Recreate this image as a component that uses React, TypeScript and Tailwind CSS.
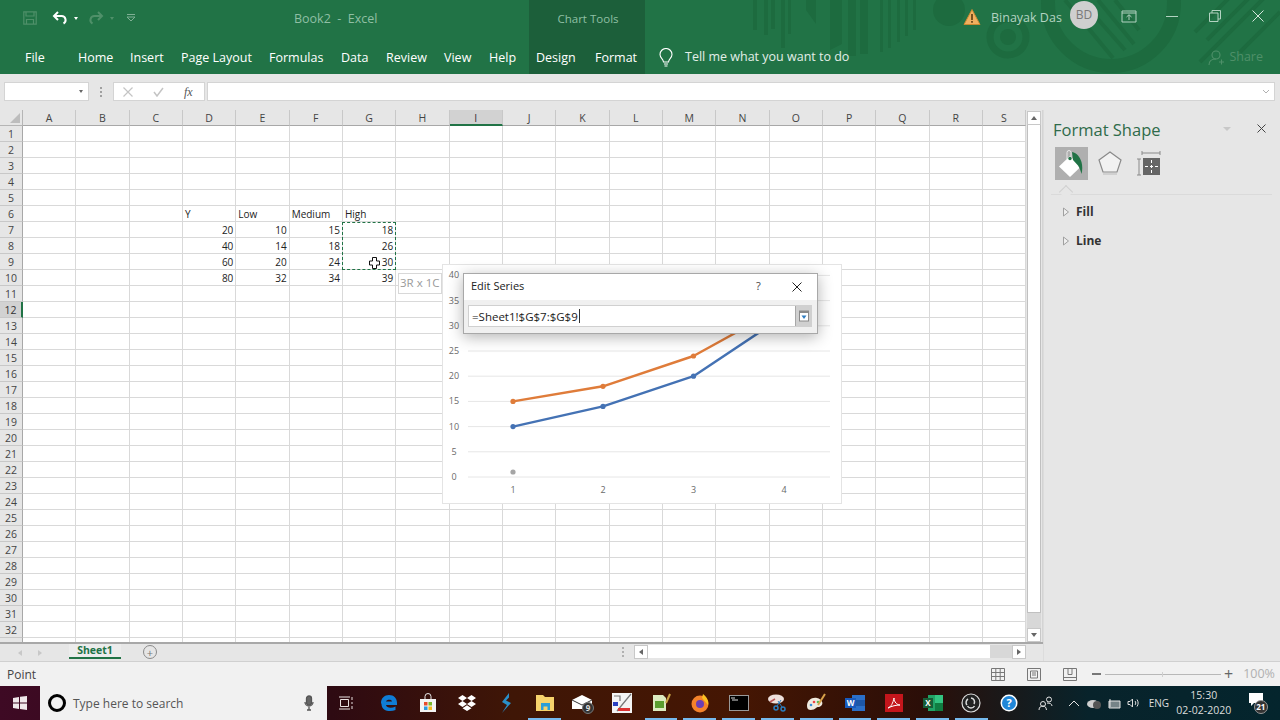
import React from "react";

const FONT = "font-['Open_Sans','Noto_Sans',sans-serif]";
const COLS = ["A","B","C","D","E","F","G","H","I","J","K","L","M","N","O","P","Q","R","S"];
const DATA: Record<string, string> = {
  "6D":"Y","6E":"Low","6F":"Medium","6G":"High",
  "7D":"20","7E":"10","7F":"15","7G":"18",
  "8D":"40","8E":"14","8F":"18","8G":"26",
  "9D":"60","9E":"20","9F":"24","9G":"30",
  "10D":"80","10E":"32","10F":"34","10G":"39",
};
const ROWS = Array.from({ length: 33 }, (_, i) => i + 1);

function TitlePattern() {
  return (
    <svg className="absolute inset-0 pointer-events-none" width="1280" height="74" viewBox="0 0 1280 74">
      <path d="M529 0h116v74H529z" fill="#1c5f3a" />
      <g fill="#1d6b3f">
        <rect x="753" y="0" width="4" height="30" />
        <rect x="764" y="0" width="4" height="35" />
        <rect x="771" y="0" width="4" height="29" />
        <rect x="781" y="0" width="4" height="48" />
        <rect x="788" y="0" width="3" height="34" />
        <rect x="860" y="0" width="8" height="54" />
        <rect x="880" y="0" width="3" height="52" />
        <rect x="888" y="0" width="3" height="48" />
        <rect x="897" y="0" width="3" height="42" />
        <rect x="905" y="0" width="3" height="36" />
        <rect x="913" y="0" width="3" height="30" />
        <path d="M806 0h10v24l-10-14zM830 0h12v44l-12 6zM848 0h8v56h-8z" />
        <circle cx="949" cy="10" r="16" />
        <circle cx="1008" cy="37" r="8" />
      </g>
      <g fill="none" stroke="#1d6b3f">
        <circle cx="1008" cy="37" r="18" strokeWidth="7" />
        <circle cx="1111" cy="3" r="63" strokeWidth="14" />
        <path d="M1065 0l48 58M1081 0l44 50M1098 0l36 44M1115 0l24 30" strokeWidth="4" />
        <path d="M1195 32l40-40M1207 40l50-50M1200 62l68-68M1240 52l40-40" strokeWidth="4" />
      </g>
    </svg>
  );
}

function Titlebar() {
  return (
    <div className="relative h-[74px] bg-[#217346] overflow-hidden">
      <TitlePattern />
      <div className="relative h-[36px] flex items-center">
        <svg className="ml-[23px]" width="14" height="14" viewBox="0 0 14 14" fill="none" stroke="#4f9069" strokeWidth="1.200">
          <path d="M.8.8h12.400v12.400H.8z" /><path d="M3 1v4h8V1M3.500 13V8.500h7V13" />
        </svg>
        <svg className="ml-[15px]" width="16" height="14" viewBox="0 0 16 14" fill="none" stroke="#fff" strokeWidth="2">
          <path d="M6 1L2 5l4 4M2 5h7.500a4 4 0 0 1 2 7.500" />
        </svg>
        <span className="ml-[6px] w-0 h-0 border-x-[2.500px] border-x-transparent border-t-[3px] border-t-white" />
        <svg className="ml-[10px]" width="16" height="14" viewBox="0 0 16 14" fill="none" stroke="#4f9069" strokeWidth="2">
          <path d="M10 1l4 4-4 4M14 5H6.500a4 4 0 0 0-2 7.500" />
        </svg>
        <span className="ml-[6px] w-0 h-0 border-x-[2.500px] border-x-transparent border-t-[3px] border-t-[#4f9069]" />
        <svg className="ml-[12px]" width="10" height="8" viewBox="0 0 10 8" fill="none" stroke="#7fb094" strokeWidth="1">
          <path d="M1 .5h8M1 3l4 4 4-4z" />
        </svg>
        <div className={`ml-[158px] pt-[2px] w-[92px] text-[12.500px] whitespace-pre text-[#8fbfa4] ${FONT}`}>Book2  -  Excel</div>
        <div className={`ml-[144px] pt-[2px] w-[116px] text-center text-[11.500px] text-[#8fbfa4] ${FONT}`}>Chart Tools</div>
        <svg className="ml-[317px] mt-[-3px]" width="18" height="18" viewBox="0 0 18 18">
          <path d="M9 1.500L17 16.500H1z" fill="#f0b060" stroke="#c98a30" />
          <path d="M8.200 6h1.600v6H8.200zM8.200 13h1.600v1.800H8.200z" fill="#5a3a10" />
        </svg>
        <div className={`ml-[10px] text-[12.500px] w-[78px] whitespace-nowrap text-[#b3d3c1] ${FONT}`}>Binayak Das</div>
        <div className={`ml-[1px] mt-[-6px] w-[28px] h-[28px] rounded-full bg-[#cfcfcf] text-[#7a7a7a] text-[12px] flex items-center justify-center ${FONT}`}>BD</div>
        <svg className="ml-[23px] mt-[-4px]" width="16" height="13" viewBox="0 0 16 13" fill="none" stroke="#b3d3c1">
          <path d="M1 1h14v11H1zM1 3h14M8 10V5M5.500 7L8 4.700 10.500 7" />
        </svg>
        <div className="ml-[29px] mt-[-4px] w-[12px] h-px bg-[#b3d3c1]" />
        <svg className="ml-[31px] mt-[-4px]" width="12" height="12" viewBox="0 0 12 12" fill="none" stroke="#b3d3c1">
          <path d="M.5 3h8.500v8.500H.5zM3 3V.5h8.500V9H9" />
        </svg>
        <svg className="ml-[31px] mt-[-4px]" width="12" height="12" viewBox="0 0 12 12" stroke="#d5e6dc" strokeWidth="1">
          <path d="M.5.500l11 11M11.500.500l-11 11" />
        </svg>
      </div>
      <div className={`relative h-[38px] flex items-center text-[12.500px] text-white pt-[7px] ${FONT}`}>
        <div className="ml-[25px] w-[53px]">File</div>
        <div className="w-[52px]">Home</div>
        <div className="w-[51px]">Insert</div>
        <div className="w-[88px]">Page Layout</div>
        <div className="w-[72px]">Formulas</div>
        <div className="w-[45px]">Data</div>
        <div className="w-[58px]">Review</div>
        <div className="w-[45px]">View</div>
        <div className="w-[47px]">Help</div>
        <div className="flex items-center w-[109px]">
          <span className="w-[59px]">Design</span><span>Format</span>
        </div>
        <svg className="ml-[14px] mt-[-2px]" width="14" height="20" viewBox="0 0 14 20" fill="none" stroke="#fff" strokeWidth="1.100">
          <path d="M4.500 14c0-3-3.500-4-3.500-7.500a6 6 0 0 1 12 0C13 10 9.500 11 9.500 14zM5 16h4M5.500 18h3" />
        </svg>
        <div className="ml-[12px] mt-[-2px] whitespace-nowrap text-[12.500px] text-[#e3efe8]">Tell me what you want to do</div>
        <svg className="ml-[359px] mt-[-2px]" width="16" height="16" viewBox="0 0 16 16" fill="none" stroke="#4f9069" strokeWidth="1.100">
          <circle cx="8" cy="5" r="4" /><path d="M1 15c0-4 3-6 7-6M11 12h5M13.500 9.500v5" />
        </svg>
        <div className="ml-[5px] mt-[-2px] text-[#4f9069]">Share</div>
      </div>
    </div>
  );
}

function FormulaBar() {
  return (
    <div className="h-[36px] bg-[#e6e6e6] flex items-center pb-[1px] pl-[4px] pr-[5px]">
      <div className="w-[85px] h-[19px] bg-white border border-[#d4d4d4] flex items-center justify-end pr-[5px]">
        <span className="w-0 h-0 border-x-[2.500px] border-x-transparent border-t-[3px] border-t-[#666]" />
      </div>
      <div className="ml-[11px] w-[2px] h-[10px] border-l-2 border-dotted border-[#a0a0a0]" />
      <div className="ml-[11px] w-[92px] h-[19px] bg-white border border-[#d4d4d4] flex items-center">
        <svg className="ml-[9px]" width="10" height="10" viewBox="0 0 10 10" stroke="#c4c4c4" strokeWidth="1.200"><path d="M.5.500l9 9M9.500.500l-9 9" /></svg>
        <svg className="ml-[20px]" width="11" height="10" viewBox="0 0 11 10" fill="none" stroke="#c4c4c4" strokeWidth="1.500"><path d="M1 5l3 4 6-8" /></svg>
        <span className="ml-[20px] text-[12px] italic text-[#555] font-['Liberation_Serif',serif]">fx</span>
      </div>
      <div className="ml-[2px] flex-1 h-[19px] bg-white border border-[#d4d4d4] flex items-center justify-end pr-[4px]">
        <svg width="8" height="5" viewBox="0 0 8 5" fill="none" stroke="#b0b0b0"><path d="M1 1l3 3 3-3" /></svg>
      </div>
    </div>
  );
}

function Grid() {
  return (
    <div className={`relative w-[1026px] h-[532px] overflow-hidden bg-white ${FONT}`}>
      <div className="grid grid-cols-[23px_repeat(18,53.330px)_43px] auto-rows-[16px]">
        <div className="bg-[#e6e6e6] border-r border-b border-[#b5b5b5] relative">
          <span className="absolute right-[2px] bottom-[2px] w-0 h-0 border-l-[10px] border-l-transparent border-b-[10px] border-b-[#bdbdbd]" />
        </div>
        {COLS.map((c) => (
          <div
            key={c}
            className={c === "I"
              ? "h-[16px] bg-[#d2d2d2] border-b-2 border-b-[#217346] border-r border-r-[#c8c8c8] text-[10.500px] leading-[17px] text-center text-[#333]"
              : "h-[16px] bg-[#e6e6e6] border-b border-b-[#a8a8a8] border-r border-r-[#c8c8c8] text-[10.500px] leading-[17px] text-center text-[#444]"}
          >
            {c}
          </div>
        ))}
        {ROWS.map((r) => (
          <React.Fragment key={r}>
            <div
              className={r === 12
                ? "h-[16px] bg-[#d2d2d2] border-r-2 border-r-[#217346] border-b border-b-[#c8c8c8] text-[10.500px] leading-[17px] text-center text-[#333]"
                : "h-[16px] bg-[#e6e6e6] border-r border-r-[#a8a8a8] border-b border-b-[#c8c8c8] text-[10.500px] leading-[17px] text-center text-[#444]"}
            >
              {r <= 32 ? r : ""}
            </div>
            {COLS.map((c) => {
              const v = DATA[`${r}${c}`];
              const num = v !== undefined && /^\d+$/.test(v);
              return (
                <div
                  key={c}
                  className={`h-[16px] border-r border-b border-[#d9d9d9] text-[10px] leading-[16px] text-[#222] px-[2px] whitespace-nowrap ${num ? "text-right" : "text-left"}`}
                >
                  {v}
                </div>
              );
            })}
          </React.Fragment>
        ))}
      </div>

      <div className="absolute left-[342px] top-[112px] w-[54px] h-[48px] border border-dashed border-[#217346]" />
      <svg className="absolute left-[369px] top-[147px]" width="11" height="12" viewBox="0 0 11 12" fill="#fff" stroke="#111" strokeWidth="1">
        <path d="M3.500.500h4v3.500h3v4h-3v3.500h-4V8h-3V4h3z" />
      </svg>
      <div className="absolute left-[398px] top-[163px] w-[44px] h-[21px] bg-white border border-[#d8d8d8] text-[11.500px] leading-[18px] text-[#9a9a9a] pl-[1px] whitespace-nowrap">3R x 1C</div>

      <div className="absolute left-[442px] top-[154px] w-[400px] h-[240px] bg-white border border-[#e4e4e4]">
        <svg width="398" height="238" viewBox="443 265 398 238">
          <g stroke="#e6e6e6" strokeWidth="1">
            {[0,1,2,3,4,5,6,7,8].map((i) => (
              <line key={i} x1="468" x2="830" y1={477 - i * 25.2} y2={477 - i * 25.2} />
            ))}
          </g>
          <g fontFamily="'Open Sans',sans-serif" fontSize="9" fill="#6a6a6a" textAnchor="middle">
            {[0,5,10,15,20,25,30,35,40].map((v, i) => (
              <text key={v} x="454" y={480 - i * 25.2}>{v}</text>
            ))}
            {[[1,513],[2,603],[3,693.500],[4,784]].map(([l, x]) => (
              <text key={l} x={x} y="493">{l}</text>
            ))}
          </g>
          <polyline points="513,401.400 603,386.300 693.500,356 784,306" fill="none" stroke="#df7c3a" strokeWidth="2.400" strokeLinejoin="round" />
          <polyline points="513,426.600 603,406.400 693.500,376.200 784,316" fill="none" stroke="#4472b4" strokeWidth="2.400" strokeLinejoin="round" />
          {[[513,401.400],[603,386.300],[693.500,356]].map(([x,y]) => <circle key={x} cx={x} cy={y} r="2.600" fill="#df7c3a" />)}
          {[[513,426.600],[603,406.400],[693.500,376.200]].map(([x,y]) => <circle key={x} cx={x} cy={y} r="2.600" fill="#4472b4" />)}
          <circle cx="513" cy="472" r="2.600" fill="#a5a5a5" />
        </svg>
      </div>

      <div className="absolute left-[463px] top-[163px] w-[355px] h-[61px] bg-[#f0f0f0] border border-[#a8a8a8] shadow-[0_3px_14px_rgba(0,0,0,0.3)]">
        <div className="h-[26px] bg-white flex items-center pl-[7px] pb-[1px] text-[11px] text-[#222]">
          <span className="w-[285px]">Edit Series</span>
          <span className="w-[36px] text-[11px] text-[#444]">?</span>
          <svg width="10" height="10" viewBox="0 0 10 10" stroke="#222" strokeWidth="1"><path d="M.5.500l9 9M9.500.500l-9 9" /></svg>
        </div>
        <div className="mt-[5px] ml-[4px] mr-[5px] h-[22px] bg-white border border-[#d0d0d0] flex items-center">
          <span className="pl-[3px] pt-[2px] text-[11.500px] text-[#222] whitespace-nowrap">=Sheet1!$G$7:$G$9</span>
          <span className="ml-[1px] w-px h-[14px] bg-[#333]" />
          <div className="ml-auto w-[16px] h-[20px] bg-[#d0d0d0] border-l border-[#a8a8a8] flex items-center justify-center">
            <svg width="10" height="12" viewBox="0 0 10 12"><rect x=".5" y="1" width="9" height="10" fill="#fff" stroke="#8a8a8a" /><path d="M1 1h8v2H1z" fill="#8a8a8a" /><path d="M2.500 5.500h5L5 9z" fill="#2f7cc0" /></svg>
          </div>
        </div>
      </div>
    </div>
  );
}

function VScroll() {
  return (
    <div className="w-[17px] h-[532px] bg-[#e6e6e6] flex flex-col pl-[1px] pr-[1px] pt-[1px] border-r border-[#d4d4d4]">
      <div className="h-[14px] bg-white border border-[#c8c8c8] flex items-center justify-center">
        <span className="w-0 h-0 border-x-[3.500px] border-x-transparent border-b-[4px] border-b-[#666]" />
      </div>
      <div className="h-[488px] bg-white border-x border-b border-[#c0c0c0]" />
      <div className="flex-1 bg-[#d8d8d8]" />
      <div className="h-[14px] bg-white border border-[#c8c8c8] flex items-center justify-center">
        <span className="w-0 h-0 border-x-[3.500px] border-x-transparent border-t-[4px] border-t-[#666]" />
      </div>
    </div>
  );
}

function Panel() {
  return (
    <div className={`w-[237px] bg-[#e6e6e6] border-l border-[#dcdcdc] ${FONT}`}>
      <div className="h-[37px] flex items-start pl-[9px] pt-[9px]">
        <span className="text-[16.500px] leading-[22px] text-[#2f6b4a] whitespace-nowrap">Format Shape</span>
        <span className="ml-[62px] mt-[8px] w-0 h-0 border-x-[4px] border-x-transparent border-t-[4px] border-t-[#c8c8c8]" />
        <svg className="ml-[26px] mt-[5px]" width="9" height="9" viewBox="0 0 9 9" stroke="#444" strokeWidth="1"><path d="M.5.500l8 8M8.500.500l-8 8" /></svg>
      </div>
      <div className="flex items-center h-[33px] ml-[11px]">
        <div className="w-[33px] h-[33px] bg-[#afafaf] flex items-center justify-center">
          <svg width="33" height="33" viewBox="0 0 33 33">
            <path d="M15 9l11 10.500L15 30 4 19.500z" fill="#fff" />
            <path d="M17 5c5 1 8 5 9.500 10 1 4 1 8 0 12-.8-3-1.800-6-3.500-8.500l-5-5.500z" fill="#217346" />
            <path d="M12 12V5.500a2 2 0 0 1 4 0V11" fill="none" stroke="#e8e8e8" strokeWidth="1" />
            <circle cx="15" cy="11.500" r="1.700" fill="#217346" />
          </svg>
        </div>
        <svg className="ml-[9px]" width="26" height="28" viewBox="0 0 26 28" fill="#f2f2f2" stroke="#8a8a8a" strokeWidth="1.200">
          <path d="M13 2l11 8-4 12H6L2 10z" /><path d="M6 24h14" stroke="#d0d0d0" strokeWidth="2" />
        </svg>
        <svg className="ml-[12px]" width="26" height="28" viewBox="0 0 26 28" fill="none" stroke="#8a8a8a">
          <path d="M7 3h18M7 1v4M25 1v4M2 9h4M2 25h4M4 9v16" />
          <rect x="8" y="8" width="17" height="17" fill="#666" stroke="none" />
          <path d="M16.500 10v13M10 16.500h13" stroke="#fff" strokeDasharray="3 2" />
        </svg>
      </div>
      <div className="relative mt-[14px] ml-[7px] mr-[8px] h-px bg-[#dadada]">
        <span className="absolute left-[10px] top-[-7px] w-[10px] h-[10px] rotate-45 border-l border-t border-[#d0d0d0] bg-[#e6e6e6]" />
      </div>
      <div className="mt-[2px] pl-[19px] flex flex-col text-[12px] font-bold text-[#333]">
        <div className="h-[29px] flex items-center">
          <svg width="6" height="10" viewBox="0 0 6 10" fill="#eee" stroke="#a0a0a0"><path d="M.5 1l5 4-5 4z" /></svg>
          <span className="ml-[7px]">Fill</span>
        </div>
        <div className="h-[30px] flex items-center">
          <svg width="6" height="10" viewBox="0 0 6 10" fill="#eee" stroke="#a0a0a0"><path d="M.5 1l5 4-5 4z" /></svg>
          <span className="ml-[7px]">Line</span>
        </div>
      </div>
    </div>
  );
}

function TabBar() {
  return (
    <div className={`h-[19px] w-[1043px] bg-[#e6e6e6] border-t-2 border-[#a8a8a8] flex items-start ${FONT}`}>
      <span className="ml-[18px] mt-[6px] w-0 h-0 border-y-[3px] border-y-transparent border-r-[4px] border-r-[#c8c8c8]" />
      <span className="ml-[16px] mt-[6px] w-0 h-0 border-y-[3px] border-y-transparent border-l-[4px] border-l-[#c8c8c8]" />
      <div className="ml-[27px] w-[52px] h-[15px] bg-[#ececec] border-b-2 border-[#217346] text-[10.500px] font-bold leading-[12px] text-center text-[#217346]">Sheet1</div>
      <div className="ml-[22px] mt-[1px] w-[14px] h-[14px] rounded-full border border-[#8a8a8a] flex items-center justify-center text-[11px] leading-none text-[#777]">+</div>
      <div className="ml-[465px] mt-[3px] w-[2px] h-[10px] border-l-2 border-dotted border-[#b0b0b0]" />
      <div className="ml-[10px] mt-[1px] w-[14px] h-[14px] bg-white border border-[#c8c8c8] flex items-center justify-center">
        <span className="w-0 h-0 border-y-[3px] border-y-transparent border-r-[4px] border-r-[#666]" />
      </div>
      <div className="mt-[1px] w-[342px] h-[13px] bg-white" />
      <div className="mt-[1px] w-[22px] h-[13px] bg-[#d8d8d8]" />
      <div className="mt-[1px] w-[14px] h-[14px] bg-white border border-[#c8c8c8] flex items-center justify-center">
        <span className="w-0 h-0 border-y-[3px] border-y-transparent border-l-[4px] border-l-[#666]" />
      </div>
    </div>
  );
}

function StatusBar() {
  return (
    <div className={`h-[25px] bg-[#f1f1f1] border-t border-[#d0d0d0] flex items-center ${FONT}`}>
      <span className="ml-[7px] w-[984px] text-[12px] pt-[1px] text-[#444]">Point</span>
      <svg width="14" height="13" viewBox="0 0 14 13" fill="none" stroke="#777"><path d="M.5.500h13v12H.5zM.5 4.500h13M.5 8.500h13M4.800.500v12M9.200.500v12" /></svg>
      <svg className="ml-[22px]" width="14" height="13" viewBox="0 0 14 13" fill="none" stroke="#777"><path d="M.5.500h13v12H.5zM3.500 3h7v7h-7zM5 5h4M5 7h4" /></svg>
      <svg className="ml-[22px]" width="14" height="13" viewBox="0 0 14 13" fill="none" stroke="#777"><path d="M.5.500h13v12H.5zM5 .5v6h4v-6M.5 9.500h13" /></svg>
      <div className="ml-[15px] w-[9px] h-[2px] bg-[#777]" />
      <div className="relative ml-[4px] w-[116px] h-px bg-[#b8b8b8]">
        <span className="absolute left-[57px] top-[-2px] w-px h-[5px] bg-[#d0d0d0]" />
      </div>
      <div className="ml-[3px] text-[16px] leading-none text-[#666]">+</div>
      <div className="ml-[10px] text-[12.500px] text-[#b0b0b0]">100%</div>
    </div>
  );
}

function Win() {
  return (
    <svg width="14" height="14" viewBox="0 0 14 14" fill="#efe8ea">
      <path d="M0 2l6-1v5.500H0zM7 .800L14 0v6.500H7zM0 7.500h6V13l-6-1zM7 7.500h7V14l-7-1z" />
    </svg>
  );
}

const Slot = ({ children, active }: { children: React.ReactNode; active?: boolean }) => (
  <div className="relative w-[38.800px] h-[34px] flex items-center justify-center">
    {children}
    {active && <span className="absolute bottom-0 left-[3px] right-[3px] h-[2px] bg-[#76b9ed]" />}
  </div>
);

function Taskbar() {
  return (
    <div className={`h-[34px] flex items-center text-white bg-[linear-gradient(90deg,#3e0a24_0%,#2e0a12_26%,#3f1606_40%,#451603_58%,#2b0e08_72%,#08232b_85%,#04252d_100%)] ${FONT}`}>
      <div className="w-[40px] flex justify-center"><Win /></div>
      <div className="w-[287px] h-[34px] bg-[#f1f1f1] flex items-center">
        <span className="ml-[8px] w-[18px] h-[18px] rounded-full border-[3px] border-black" />
        <span className="ml-[7px] pt-[1px] w-[231px] text-[12px] text-[#555]">Type here to search</span>
        <svg width="10" height="16" viewBox="0 0 10 16" fill="none" stroke="#555" strokeWidth="1.300"><rect x="2.500" y="1" width="5" height="9" rx="2.500" fill="#666" /><path d="M1 7a4 4 0 0 0 8 0M5 12v3M3 15h4" /></svg>
      </div>
      <div className="w-[43px] flex justify-center pr-[5px]">
        <svg width="14" height="14" viewBox="0 0 14 14" fill="none" stroke="#e8e0e0"><path d="M1.500 3.500h8v7h-8zM0 1h11M0 13h11M13 1v3M13 6v2M13 10v3" /></svg>
      </div>
      <Slot>
        <svg width="18" height="18" viewBox="0 0 18 18"><path d="M1 9C1 4 4.500 1 9 1c5 0 8 3.500 8 8v2H6c.5 3 5.500 3.500 9.500 1.500V16c-5 2-14 1.500-14-6zM6 7.500h6C12 5 6.500 5 6 7.500z" fill="#0f7dd6" /></svg>
      </Slot>
      <Slot>
        <svg width="20" height="20" viewBox="0 0 20 20"><path d="M2 6h16v13H2z" fill="#f4f4f4" /><path d="M7 6V3.500a3 3 0 0 1 6 0V6" fill="none" stroke="#e8e8e8" /><path d="M6 9h3.500v3.500H6z" fill="#e84c2c" /><path d="M10.500 9H14v3.500h-3.500z" fill="#7cb92c" /><path d="M6 13.500h3.500V17H6z" fill="#2b9ae0" /><path d="M10.500 13.500H14V17h-3.500z" fill="#f5b81c" /></svg>
      </Slot>
      <Slot>
        <svg width="20" height="18" viewBox="0 0 20 18" fill="#fff"><path d="M5.500 1L10 4 5.500 7 1 4zM14.500 1L19 4l-4.500 3L10 4zM5.500 7L10 10l-4.500 3L1 10zM14.500 7L19 10l-4.500 3L10 10zM5.500 14.200L10 11.200l4.500 3L10 17z" /></svg>
      </Slot>
      <Slot>
        <svg width="12" height="22" viewBox="0 0 12 22"><path d="M9 1L2 10l5 3-5 8 9-10-5-2.500 3-3z" fill="#2a8fc8" /></svg>
      </Slot>
      <Slot active>
        <svg width="20" height="18" viewBox="0 0 20 18"><path d="M1 1h7l2 2h9v14H1z" fill="#f6d36c" /><path d="M6 9h9v7h-2.500v-3.500h-4V16H6z" fill="#2a9fd8" /></svg>
      </Slot>
      <Slot>
        <svg width="24" height="24" viewBox="0 0 24 24"><path d="M1 9l10-5 10 5v9H1z" fill="#fff" /><path d="M1 9l10 5 10-5" fill="none" stroke="#333" /><circle cx="17" cy="17" r="5.500" fill="#333" stroke="#777" /><text x="17" y="20" textAnchor="middle" fontSize="8" fontWeight="700" fill="#ddd" fontFamily="'Open Sans',sans-serif">9</text></svg>
      </Slot>
      <Slot>
        <svg width="20" height="20" viewBox="0 0 20 20"><rect width="20" height="20" fill="#f4f4f4" /><path d="M2 3h6v5M19 1L5 18" fill="none" stroke="#777" strokeWidth="1.200" /><path d="M1 9h5v4H1z" fill="#2b3fc0" /><path d="M6 15h12v3H6z" fill="#d33" /></svg>
      </Slot>
      <Slot active>
        <svg width="20" height="20" viewBox="0 0 20 20"><path d="M2 2h10l3 3v13H2z" fill="#dcebc0" /><path d="M4 8h9v7H4z" fill="#5a9e2f" /><path d="M15 10l4-9" stroke="#c9a243" strokeWidth="2" /></svg>
      </Slot>
      <Slot active>
        <svg width="20" height="20" viewBox="0 0 20 20"><circle cx="10" cy="11" r="8.500" fill="#f4822b" /><path d="M13 1c4 3 6 7 5 11L12 5z" fill="#fcc021" /><circle cx="10" cy="11" r="4" fill="#6a3fb5" /></svg>
      </Slot>
      <Slot active>
        <svg width="20" height="16" viewBox="0 0 20 16"><rect x=".5" y=".5" width="19" height="15" fill="#000" stroke="#999" /><path d="M2 3h4M3 5h6" stroke="#ddd" /></svg>
      </Slot>
      <Slot active>
        <svg width="20" height="20" viewBox="0 0 20 20"><ellipse cx="9" cy="6" rx="8" ry="4.500" fill="#eee0dc" /><path d="M3 9l5-3" stroke="#b55" strokeWidth="1.500" /><circle cx="9" cy="15" r="2" fill="none" stroke="#2a7fc0" strokeWidth="1.500" /><circle cx="16" cy="16" r="2" fill="none" stroke="#2a7fc0" strokeWidth="1.500" /><path d="M10 13l4-6M15 14l-4-6" stroke="#2a7fc0" /></svg>
      </Slot>
      <Slot active>
        <svg width="20" height="20" viewBox="0 0 20 20"><path d="M1 13c0-6 5-9 10-8 5 1 7 6 4 8s-3 0-5 2-9 4-9-2z" fill="#efeadf" /><circle cx="5" cy="12" r="1.300" fill="#3a8ed8" /><circle cx="8" cy="9" r="1.300" fill="#e44" /><circle cx="12" cy="9" r="1.300" fill="#5b5" /><path d="M12 12L19 1" stroke="#d9a24a" strokeWidth="2" /></svg>
      </Slot>
      <Slot active>
        <svg width="20" height="18" viewBox="0 0 20 18"><rect x="7" y="1" width="13" height="16" fill="#2b6fc8" /><path d="M7 6h13v6H7z" fill="#1d57a8" /><rect y="4" width="11" height="10" fill="#185abd" /><text x="5.500" y="12" textAnchor="middle" fontSize="8" fontWeight="700" fill="#fff" fontFamily="'Open Sans',sans-serif">W</text></svg>
      </Slot>
      <Slot active>
        <svg width="18" height="18" viewBox="0 0 18 18"><rect width="18" height="18" fill="#c4161c" /><path d="M3 14c3-1 5-5 6-10 0 4 3 7 6 7-4 0-8 1-12 3z" fill="none" stroke="#fff" /></svg>
      </Slot>
      <Slot active>
        <svg width="20" height="18" viewBox="0 0 20 18"><rect x="5" y="1" width="15" height="16" fill="#21a366" /><path d="M12 1h8v8h-8z" fill="#33c481" /><path d="M12 9h8v8h-8z" fill="#107c41" /><rect y="4" width="10" height="10" fill="#185c37" /><text x="5" y="12" textAnchor="middle" fontSize="8" fontWeight="700" fill="#fff" fontFamily="'Open Sans',sans-serif">X</text></svg>
      </Slot>
      <Slot active>
        <svg width="20" height="20" viewBox="0 0 20 20" fill="none" stroke="#ddd"><circle cx="10" cy="10" r="9" fill="#222" strokeWidth="1.200" /><path d="M10 5a4 4 0 0 1 3 6M13.500 13a4 4 0 0 1-7 0M6 12a4 4 0 0 1 1-6" strokeWidth="1.500" /></svg>
      </Slot>
      <div className="w-[20px] flex justify-center ml-[8px]">
        <svg width="18" height="18" viewBox="0 0 18 18"><circle cx="9" cy="9" r="8.500" fill="#fff" /><circle cx="9" cy="9" r="7" fill="#1f86d8" /><text x="9" y="13" textAnchor="middle" fontSize="11" fontWeight="700" fill="#fff" fontFamily="'Open Sans',sans-serif">?</text></svg>
      </div>
      <svg className="ml-[19px]" width="16" height="15" viewBox="0 0 16 15" fill="none" stroke="#e4e4e4"><circle cx="5" cy="8" r="2.500" /><circle cx="11" cy="3.500" r="2.500" /><path d="M1 14c0-3 2-4 4-4s3 1 3.500 4M9 7c3 0 5 1 5 3" /></svg>
      <svg className="ml-[14px]" width="12" height="7" viewBox="0 0 12 7" fill="none" stroke="#e4e4e4"><path d="M1 6l5-5 5 5" /></svg>
      <svg className="ml-[7px]" width="14" height="11" viewBox="0 0 14 11"><ellipse cx="6" cy="6" rx="6" ry="4" fill="#cfcfcf" /><circle cx="10" cy="7" r="4" fill="#555" /></svg>
      <svg className="ml-[6px]" width="14" height="11" viewBox="0 0 14 11" fill="none" stroke="#e4e4e4"><path d="M2 3h11v7H2z" fill="#e4e4e4" fillOpacity=".5" /><path d="M3 1v8" /></svg>
      <svg className="ml-[6px]" width="12" height="12" viewBox="0 0 12 12" fill="none" stroke="#ddd"><path d="M1 4.500h2L5.500 2v8L3 7.500H1zM8 4c1 1 1 3 0 4M10 2.500c1.500 2 1.500 5 0 7" /></svg>
      <span className="ml-[10px] w-[20px] text-[10px] text-[#ddd]">ENG</span>
      <div className="ml-[8px] w-[54px] flex flex-col items-center text-[10.500px] leading-[15px] text-[#ddd]">
        <span>15:30</span>
        <span className="whitespace-nowrap">02-02-2020</span>
      </div>
      <div className="relative ml-[18px] w-[24px] h-[24px]">
        <svg className="absolute left-0 top-[2px]" width="14" height="13" viewBox="0 0 14 13" fill="#fff"><path d="M0 0h14v10H5l-3 3v-3H0z" /></svg>
        <span className="absolute left-[5px] top-[9px] w-[14px] h-[14px] rounded-full bg-[#333] border border-[#999] text-[8px] leading-[12px] text-center font-bold">21</span>
      </div>
    </div>
  );
}

export default function App() {
  return (
    <div className="w-[1280px] h-[720px] overflow-hidden bg-[#e6e6e6]">
      <Titlebar />
      <FormulaBar />
      <div className="flex h-[551px]">
        <div className="w-[1043px]">
          <div className="flex h-[532px]">
            <Grid />
            <VScroll />
          </div>
          <TabBar />
        </div>
        <Panel />
      </div>
      <StatusBar />
      <Taskbar />
    </div>
  );
}
